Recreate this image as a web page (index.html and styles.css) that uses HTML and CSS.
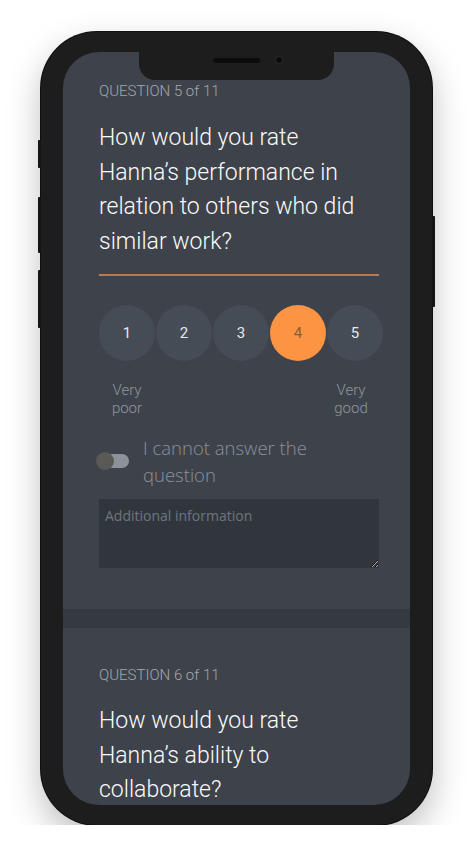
FILE: index.html
```html
<!DOCTYPE html>
<html lang="en">
<head>
    <meta charset="UTF-8">
    <meta name="viewport" content="width=device-width, initial-scale=1.0">
    <title>Feedback survey</title>
    <link rel="stylesheet" href="styles.css">
</head>
<body>
    <div class="phone">
        <span class="side-btn left b1"></span>
        <span class="side-btn left b2"></span>
        <span class="side-btn left b3"></span>
        <span class="side-btn right b4"></span>
        <div class="screen">
            <div class="notch">
                <span class="speaker"></span>
                <span class="camera"></span>
            </div>

            <div class="question">
                <p class="q-label">QUESTION 5 of 11</p>
                <h2 class="q-title">How would you rate Hanna’s performance in relation to others who did similar work?</h2>
                <div class="divider"></div>
                <div class="rating">
                    <button class="dot">1</button>
                    <button class="dot">2</button>
                    <button class="dot">3</button>
                    <button class="dot active">4</button>
                    <button class="dot">5</button>
                </div>
                <div class="scale">
                    <span>Very<br>poor</span>
                    <span>Very<br>good</span>
                </div>
                <label class="skip">
                    <span class="toggle"><span class="knob"></span></span>
                    <span class="skip-text">I cannot answer the question</span>
                </label>
                <textarea class="extra" placeholder="Additional information"></textarea>
            </div>

            <div class="band"></div>

            <div class="question next">
                <p class="q-label">QUESTION 6 of 11</p>
                <h2 class="q-title">How would you rate Hanna’s ability to collaborate?</h2>
            </div>
        </div>
    </div>
</body>
</html>
```

FILE: styles.css
```css
body {
    margin: 0;
    padding: 32px 0 0 41px;
    background-color: #fff;
    font-family: Roboto, "Liberation Sans", sans-serif;
}
.phone {
    position: relative;
    width: 391px;
    height: 793px;
    box-sizing: border-box;
    padding: 20px 22px;
    background-color: #1d1d1d;
    border-radius: 56px;
    box-shadow: 0 14px 34px rgba(0,0,0,0.26), 0 0 0 1px #111;
}
.side-btn {
    position: absolute;
    width: 3px;
    background-color: #151515;
    border-radius: 1px;
}
.side-btn.left { left: -3px; }
.side-btn.right { right: -3px; }
.b1 { top: 108px; height: 28px; }
.b2 { top: 165px; height: 56px; }
.b3 { top: 238px; height: 58px; }
.b4 { top: 184px; height: 91px; }
.screen {
    position: relative;
    height: 100%;
    overflow: hidden;
    background-color: #3e434b;
    border-radius: 36px;
}
.notch {
    position: absolute;
    top: 0;
    left: 76px;
    width: 195px;
    height: 28px;
    background-color: #1d1d1d;
    border-radius: 0 0 16px 16px;
}
.speaker {
    position: absolute;
    top: 6px;
    left: 74px;
    width: 47px;
    height: 5px;
    background-color: #0c0c0c;
    border-radius: 3px;
}
.camera {
    position: absolute;
    top: 4px;
    left: 136px;
    width: 8px;
    height: 8px;
    background-color: #0a0a0a;
    border: 1px solid #2c2c2c;
    border-radius: 50%;
    box-sizing: border-box;
}
.question {
    padding: 29px 31px 41px 36px;
}
.question.next {
    padding-top: 37px;
}
.q-label {
    margin: 0;
    font-size: 15px;
    line-height: 20px;
    font-weight: 300;
    color: #a3a8b0;
}
.q-title {
    margin: 20px 0 0;
    font-size: 23px;
    line-height: 34.5px;
    font-weight: 300;
    color: #fafafa;
}
.next .q-title {
    margin-top: 19px;
}
.divider {
    margin-top: 15px;
    height: 2px;
    background-color: #b57b57;
}
.rating {
    display: flex;
    gap: 1px;
    margin-top: 29px;
}
.dot {
    flex: none;
    width: 56px;
    height: 56px;
    padding: 0;
    border: none;
    border-radius: 50%;
    background-color: #464c55;
    color: #e8e8e8;
    font-family: Roboto, "Liberation Sans", sans-serif;
    font-size: 15px;
}
.dot.active {
    background-color: #fc9444;
    color: #8d5d38;
}
.scale {
    display: flex;
    justify-content: space-between;
    width: 284px;
    margin-top: 20px;
}
.scale span {
    width: 56px;
    text-align: center;
    font-size: 15px;
    line-height: 18px;
    font-weight: 300;
    color: #8f959d;
}
.scale span:last-child {
    margin-right: 4px;
}
.skip {
    display: flex;
    align-items: center;
    gap: 11px;
    margin-top: 17px;
}
.toggle {
    position: relative;
    flex: none;
    width: 32px;
    height: 14px;
    margin-left: -2px;
    background-color: #8c9299;
    border-radius: 7px;
}
.knob {
    position: absolute;
    left: -1px;
    top: -2px;
    width: 18px;
    height: 18px;
    background-color: #5a5956;
    border-radius: 50%;
}
.skip-text {
    max-width: 190px;
    padding-left: 3px;
    font-family: "Open Sans", "Liberation Sans", sans-serif;
    font-size: 18.5px;
    line-height: 27px;
    font-weight: 300;
    color: #8b9199;
}
.extra {
    display: block;
    width: 100%;
    height: 69px;
    margin-top: 11px;
    box-sizing: border-box;
    padding: 7px 6px;
    border: none;
    background-color: #31363d;
    font-family: "Open Sans", "Liberation Sans", sans-serif;
    font-size: 14px;
    color: #cfd3d8;
}
.extra::placeholder {
    color: #6f757d;
}
.band {
    height: 19px;
    background-color: #353a41;
}
```
